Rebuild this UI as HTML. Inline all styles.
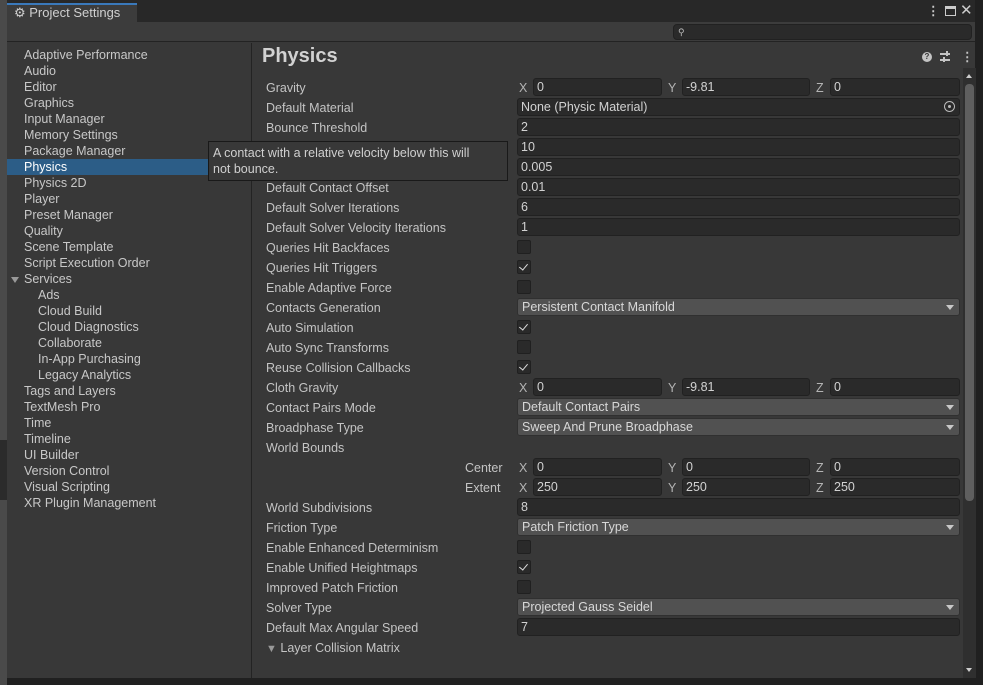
<!DOCTYPE html>
<html><head><meta charset="utf-8"><style>
*{box-sizing:border-box;margin:0;padding:0}
body{width:983px;height:685px;background:#202020;position:relative;overflow:hidden;font-family:"Liberation Sans",sans-serif;font-size:12.5px;color:#c4c4c4}
.a{position:absolute}
.t{position:absolute;white-space:nowrap;line-height:16px}
.f{position:absolute;height:18px;background:#2a2a2a;border:1px solid #212121;border-radius:3px;padding-left:3px;line-height:17px;color:#d2d2d2;white-space:nowrap}
.d{position:absolute;height:18px;background:#515151;border:1px solid #303030;border-radius:3px;padding-left:4px;line-height:16px;color:#d8d8d8;white-space:nowrap}
.d:after{content:"";position:absolute;right:5px;top:6px;border-left:4px solid transparent;border-right:4px solid transparent;border-top:5px solid #c8c8c8}
.c{position:absolute;width:14px;height:14px;background:#2a2a2a;border:1px solid #202020;border-radius:2px}
.ck:after{content:"";position:absolute;left:3px;top:1px;width:4px;height:7px;border-right:1.6px solid #ddd;border-bottom:1.6px solid #ddd;transform:rotate(40deg)}
.xl{position:absolute;color:#b4b4b4;line-height:16px}
</style></head><body>
<div class="a" style="left:0;top:0;width:7px;height:685px;background:#4a4a4a"></div>
<div class="a" style="left:0;top:440px;width:7px;height:60px;background:#2b2b2b"></div>
<div class="a" style="left:7px;top:0;width:968px;height:678px;background:#383838"></div>
<!-- tab bar -->
<div class="a" style="left:7px;top:0;width:968px;height:22px;background:#282828"></div>
<div class="a" style="left:7px;top:3px;width:130px;height:19px;background:#3c3c3c;border-top:2px solid #3a79bb"></div>
<div class="t" style="left:14px;top:5px;color:#d0d0d0;font-size:13px">⚙ Project Settings</div>
<div class="t" style="left:927px;top:3px;color:#ccc;font-weight:bold">⋮</div>
<div class="a" style="left:945px;top:6px;width:11px;height:10px;border:1.5px solid #ccc;border-top-width:3px"></div>
<div class="t" style="left:960px;top:3px;color:#ccc;font-size:15px">✕</div>
<!-- toolbar -->
<div class="a" style="left:7px;top:22px;width:968px;height:20px;background:#3c3c3c;border-bottom:1px solid #232323"></div>
<div class="a" style="left:673px;top:24px;width:299px;height:16px;background:#2a2a2a;border:1px solid #212121;border-radius:4px"></div>
<div class="t" style="left:678px;top:24px;font-size:9px;color:#bbb">⚲</div>
<!-- left panel -->
<div class="a" style="left:251px;top:43px;width:1px;height:635px;background:#232323"></div>
<div class="a" style="left:7px;top:159px;width:244px;height:16px;background:#2c5d87"></div>
<div class="t" style="left:24px;top:47px;line-height:16px;color:#c8c8c8">Adaptive Performance<br>Audio<br>Editor<br>Graphics<br>Input Manager<br>Memory Settings<br>Package Manager<br><span style="color:#fff">Physics</span><br>Physics 2D<br>Player<br>Preset Manager<br>Quality<br>Scene Template<br>Script Execution Order<br>Services<br><span style="padding-left:14px">Ads</span><br><span style="padding-left:14px">Cloud Build</span><br><span style="padding-left:14px">Cloud Diagnostics</span><br><span style="padding-left:14px">Collaborate</span><br><span style="padding-left:14px">In-App Purchasing</span><br><span style="padding-left:14px">Legacy Analytics</span><br>Tags and Layers<br>TextMesh Pro<br>Time<br>Timeline<br>UI Builder<br>Version Control<br>Visual Scripting<br>XR Plugin Management</div>
<div class="a" style="left:11px;top:277px;border-left:4px solid transparent;border-right:4px solid transparent;border-top:6px solid #999"></div>
<!-- header -->
<div class="t" style="left:262px;top:44px;font-size:20px;line-height:24px;font-weight:bold;color:#d2d2d2">Physics</div>
<div class="a" style="left:922px;top:52px;width:10px;height:10px;border-radius:50%;background:#c4c4c4;color:#383838;font-size:8px;font-weight:bold;text-align:center;line-height:10px">?</div>
<div class="a" style="left:940px;top:53px;width:10px;height:1.5px;background:#c4c4c4"></div>
<div class="a" style="left:940px;top:59px;width:10px;height:1.5px;background:#c4c4c4"></div>
<div class="a" style="left:946px;top:51px;width:1.5px;height:5px;background:#c4c4c4"></div>
<div class="a" style="left:943px;top:57px;width:1.5px;height:5px;background:#c4c4c4"></div>
<div class="t" style="left:961px;top:49px;color:#c4c4c4;font-weight:bold">⋮</div>
<!-- scrollbar -->
<div class="a" style="left:963px;top:68px;width:13px;height:610px;background:#2f2f2f"></div>
<div class="a" style="left:965px;top:84px;width:9px;height:417px;background:#5f5f5f;border-radius:4px"></div>
<div class="a" style="left:966px;top:74px;border-left:3.5px solid transparent;border-right:3.5px solid transparent;border-bottom:4px solid #ccc"></div>
<div class="a" style="left:966px;top:668px;border-left:3.5px solid transparent;border-right:3.5px solid transparent;border-top:4px solid #ccc"></div>
<!-- labels -->
<div class="t" style="left:266px;top:78px;line-height:20px">Gravity<br>Default Material<br>Bounce Threshold<br>Default Max Depenetration Velocity<br>Sleep Threshold<br>Default Contact Offset<br>Default Solver Iterations<br>Default Solver Velocity Iterations<br>Queries Hit Backfaces<br>Queries Hit Triggers<br>Enable Adaptive Force<br>Contacts Generation<br>Auto Simulation<br>Auto Sync Transforms<br>Reuse Collision Callbacks<br>Cloth Gravity<br>Contact Pairs Mode<br>Broadphase Type<br>World Bounds<br><br><br>World Subdivisions<br>Friction Type<br>Enable Enhanced Determinism<br>Enable Unified Heightmaps<br>Improved Patch Friction<br>Solver Type<br>Default Max Angular Speed<br><span style="font-size:11px;color:#999">▼</span> Layer Collision Matrix</div>
<div class="t" style="left:465px;top:458px;line-height:20px">Center<br>Extent</div>
<!-- vectors -->
<div class="xl" style="left:519px;top:78px;line-height:20px">X</div><div class="f" style="left:533px;top:78px;width:129px">0</div>
<div class="xl" style="left:668px;top:78px;line-height:20px">Y</div><div class="f" style="left:682px;top:78px;width:128px">-9.81</div>
<div class="xl" style="left:816px;top:78px;line-height:20px">Z</div><div class="f" style="left:830px;top:78px;width:130px">0</div>
<div class="f" style="left:517px;top:98px;width:443px">None (Physic Material)</div>
<div class="a" style="left:944px;top:101px;width:11px;height:11px;border:1.5px solid #bbb;border-radius:50%"><div class="a" style="left:2.5px;top:2.5px;width:3px;height:3px;background:#bbb;border-radius:50%"></div></div>
<div class="f" style="left:517px;top:118px;width:443px">2</div>
<div class="f" style="left:517px;top:138px;width:443px">10</div>
<div class="f" style="left:517px;top:158px;width:443px">0.005</div>
<div class="f" style="left:517px;top:178px;width:443px">0.01</div>
<div class="f" style="left:517px;top:198px;width:443px">6</div>
<div class="f" style="left:517px;top:218px;width:443px">1</div>
<div class="c" style="left:517px;top:240px"></div>
<div class="c ck" style="left:517px;top:260px"></div>
<div class="c" style="left:517px;top:280px"></div>
<div class="d" style="left:517px;top:298px;width:443px">Persistent Contact Manifold</div>
<div class="c ck" style="left:517px;top:320px"></div>
<div class="c" style="left:517px;top:340px"></div>
<div class="c ck" style="left:517px;top:360px"></div>
<div class="xl" style="left:519px;top:378px;line-height:20px">X</div><div class="f" style="left:533px;top:378px;width:129px">0</div>
<div class="xl" style="left:668px;top:378px;line-height:20px">Y</div><div class="f" style="left:682px;top:378px;width:128px">-9.81</div>
<div class="xl" style="left:816px;top:378px;line-height:20px">Z</div><div class="f" style="left:830px;top:378px;width:130px">0</div>
<div class="d" style="left:517px;top:398px;width:443px">Default Contact Pairs</div>
<div class="d" style="left:517px;top:418px;width:443px">Sweep And Prune Broadphase</div>
<div class="xl" style="left:519px;top:458px;line-height:20px">X</div><div class="f" style="left:533px;top:458px;width:129px">0</div>
<div class="xl" style="left:668px;top:458px;line-height:20px">Y</div><div class="f" style="left:682px;top:458px;width:128px">0</div>
<div class="xl" style="left:816px;top:458px;line-height:20px">Z</div><div class="f" style="left:830px;top:458px;width:130px">0</div>
<div class="xl" style="left:519px;top:478px;line-height:20px">X</div><div class="f" style="left:533px;top:478px;width:129px">250</div>
<div class="xl" style="left:668px;top:478px;line-height:20px">Y</div><div class="f" style="left:682px;top:478px;width:128px">250</div>
<div class="xl" style="left:816px;top:478px;line-height:20px">Z</div><div class="f" style="left:830px;top:478px;width:130px">250</div>
<div class="f" style="left:517px;top:498px;width:443px">8</div>
<div class="d" style="left:517px;top:518px;width:443px">Patch Friction Type</div>
<div class="c" style="left:517px;top:540px"></div>
<div class="c ck" style="left:517px;top:560px"></div>
<div class="c" style="left:517px;top:580px"></div>
<div class="d" style="left:517px;top:598px;width:443px">Projected Gauss Seidel</div>
<div class="f" style="left:517px;top:618px;width:443px">7</div>
<!-- tooltip -->
<div class="a" style="left:208px;top:141px;width:300px;height:40px;background:#383838;border:1px solid #191919;padding:3px 24px 3px 4px;line-height:16px;color:#d0d0d0">A contact with a relative velocity below this will not bounce.</div>
</body></html>
